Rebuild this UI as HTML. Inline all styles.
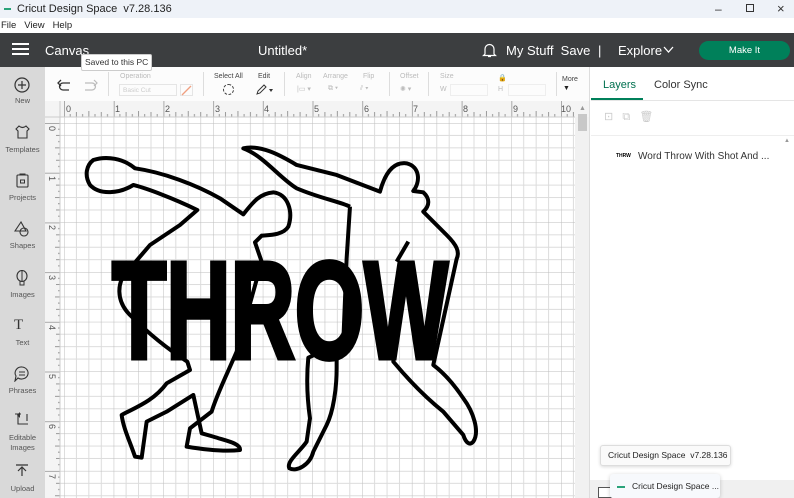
<!DOCTYPE html>
<html><head><meta charset="utf-8"><style>
*{margin:0;padding:0;box-sizing:border-box}
body{width:794px;height:498px;overflow:hidden;position:relative;font-family:"Liberation Sans",sans-serif;background:#fff}
.a{position:absolute}
.t{white-space:nowrap}
.side .lb{position:absolute;left:0;width:45px;text-align:center;font-size:7.5px;color:#555}
.tb{font-size:7px;color:#bbb}
</style></head><body>
<div class="a" style="left:0;top:0;width:794px;height:18px;background:#eef2f8"></div>
<div class="a" style="left:4px;top:8px;width:7px;height:2px;background:#2aa37a"></div>
<div class="a t" style="left:17px;top:3px;font-size:11px;color:#222">Cricut Design Space&nbsp; v7.28.136</div>
<div class="a t" style="left:715px;top:2px;font-size:12px;color:#333">–</div>
<div class="a" style="left:746px;top:4px;width:8px;height:8px;border:1px solid #333"></div>
<div class="a t" style="left:777px;top:1px;font-size:13px;color:#333">×</div>
<div class="a t" style="left:1px;top:20px;font-size:9.5px;color:#222">File&nbsp;&nbsp; View&nbsp;&nbsp; Help</div>
<div class="a" style="left:0;top:33px;width:794px;height:34px;background:#3c3e40"></div>
<div class="a" style="left:12px;top:43px;width:17px;height:2px;background:#fff;box-shadow:0 5px 0 #fff,0 10px 0 #fff"></div>
<div class="a t" style="left:45px;top:43px;font-size:13px;color:#fff">Canvas</div>
<div class="a t" style="left:258px;top:43px;font-size:13px;color:#fff">Untitled*</div>
<svg class="a" style="left:482px;top:42px" width="15" height="16"><path d="M3 12 V7 a4.5 4.5 0 0 1 9 0 V12 l1.5 1.5 H1.5Z M6 14.5 h3" fill="none" stroke="#fff" stroke-width="1.2"/></svg>
<div class="a t" style="left:506px;top:43px;font-size:13px;color:#fff">My Stuff&nbsp; Save</div>
<div class="a t" style="left:598px;top:43px;font-size:13px;color:#fff">|</div>
<div class="a t" style="left:618px;top:43px;font-size:13px;color:#fff">Explore</div>
<svg class="a" style="left:663px;top:46px" width="11" height="8"><path d="M1 1 L5.5 6 L10 1" fill="none" stroke="#fff" stroke-width="1.3"/></svg>
<div class="a" style="left:699px;top:41px;width:91px;height:19px;background:#00805a;border-radius:10px;color:#fff;font-size:9.5px;text-align:center;line-height:19px">Make It</div>
<div class="a" style="left:45px;top:67px;width:545px;height:34px;background:#fcfcfc"></div>
<svg class="a" style="left:55px;top:79px" width="45" height="14"><path d="M12 11 H6 a3.5 3.5 0 0 1 0-7 H13 M4 1 L1 4 L4 7" fill="none" stroke="#333" stroke-width="1.3" transform="translate(2,0)"/><path d="M30 11 H37 a3.5 3.5 0 0 0 0-7 H30 M39 1 L42 4 L39 7" fill="none" stroke="#bbb" stroke-width="1.2"/></svg>
<div class="a" style="left:108px;top:72px;width:1px;height:24px;background:#ddd"></div>
<div class="a t tb" style="left:120px;top:73px">Operation</div>
<div class="a" style="left:119px;top:84px;width:58px;height:12px;border:1px solid #e5e5e5;font-size:6.5px;color:#ccc;padding:2px 3px">Basic Cut</div>
<div class="a" style="left:180px;top:84px;width:13px;height:12px;border:1px solid #e5e5e5"></div>
<svg class="a" style="left:180px;top:84px" width="13" height="12"><path d="M2 11 L11 2" stroke="#f0a080" stroke-width="1.3"/></svg>
<div class="a" style="left:203px;top:72px;width:1px;height:24px;background:#ddd"></div>
<div class="a t" style="left:214px;top:73px;font-size:7px;color:#444">Select All</div>
<div class="a" style="left:223px;top:84px;width:11px;height:11px;border:1.2px dashed #444;border-radius:50%"></div>
<div class="a t" style="left:258px;top:73px;font-size:7px;color:#444">Edit</div>
<svg class="a" style="left:255px;top:84px" width="20" height="12"><path d="M2 10 L3 7 L9 1 L11 3 L5 9 Z" fill="none" stroke="#333" stroke-width="1"/><path d="M14 5 h4 l-2 3z" fill="#333"/></svg>
<div class="a" style="left:284px;top:72px;width:1px;height:24px;background:#ddd"></div>
<div class="a t tb" style="left:296px;top:73px">Align</div><div class="a t tb" style="left:297px;top:85px">|▭ ▾</div>
<div class="a t tb" style="left:323px;top:73px">Arrange</div><div class="a t tb" style="left:328px;top:85px">⧉ ▾</div>
<div class="a t tb" style="left:363px;top:73px">Flip</div><div class="a t tb" style="left:360px;top:85px">⫽ ▾</div>
<div class="a" style="left:389px;top:72px;width:1px;height:24px;background:#ddd"></div>
<div class="a t tb" style="left:400px;top:73px">Offset</div><div class="a t tb" style="left:400px;top:85px">✺ ▾</div>
<div class="a" style="left:428px;top:72px;width:1px;height:24px;background:#ddd"></div>
<div class="a t tb" style="left:440px;top:73px">Size</div>
<div class="a t tb" style="left:440px;top:86px">W</div><div class="a" style="left:450px;top:84px;width:38px;height:12px;border:1px solid #eee"></div>
<div class="a t tb" style="left:498px;top:74px">🔒</div>
<div class="a t tb" style="left:498px;top:86px">H</div><div class="a" style="left:508px;top:84px;width:38px;height:12px;border:1px solid #eee"></div>
<div class="a" style="left:556px;top:72px;width:1px;height:24px;background:#ddd"></div>
<div class="a t" style="left:562px;top:76px;font-size:7px;color:#444">More</div>
<div class="a t" style="left:563px;top:85px;font-size:7px;color:#222">▼</div>
<div class="a side" style="left:0;top:67px;width:45px;height:431px;background:#d9d9d9">
<svg class="a" style="left:13px;top:9px" width="18" height="18"><circle cx="9" cy="9" r="7" fill="none" stroke="#333" stroke-width="1.2"/><path d="M9 5v8M5 9h8" stroke="#333" stroke-width="1.2"/></svg>
<div class="lb" style="top:29px">New</div>
<svg class="a" style="left:15px;top:58px" width="15" height="14"><path d="M4 1 L1 4 L3 6 L3 13 L12 13 L12 6 L14 4 L11 1 Q7.5 4 4 1Z" fill="none" stroke="#333" stroke-width="1.1"/></svg>
<div class="lb" style="top:78px">Templates</div>
<svg class="a" style="left:16px;top:106px" width="13" height="15"><rect x="1" y="2" width="11" height="12" rx="1" fill="none" stroke="#333" stroke-width="1.1"/><path d="M4 2 V1 H9 V2 M4.5 7 h4 v3 h-4z" fill="none" stroke="#333"/></svg>
<div class="lb" style="top:126px">Projects</div>
<svg class="a" style="left:14px;top:154px" width="16" height="16"><path d="M7 1 L1 10 H12 Z" fill="none" stroke="#333" stroke-width="1.1"/><circle cx="10" cy="11" r="4" fill="none" stroke="#333" stroke-width="1.1"/></svg>
<div class="lb" style="top:174px">Shapes</div>
<svg class="a" style="left:15px;top:203px" width="14" height="17"><ellipse cx="7" cy="6" rx="5" ry="5.5" fill="none" stroke="#333" stroke-width="1.1"/><path d="M5 11 V15 H9 V11 M7 1 V11" fill="none" stroke="#333"/></svg>
<div class="lb" style="top:223px">Images</div>
<div class="a t" style="left:14px;top:250px;font-size:15px;color:#333;font-family:'Liberation Serif',serif">T</div>
<div class="lb" style="top:271px">Text</div>
<svg class="a" style="left:14px;top:299px" width="16" height="16"><path d="M8 1 a6.5 6 0 1 1 -4 11 L1 15 L2 10 A6.5 6 0 0 1 8 1Z" fill="none" stroke="#333" stroke-width="1.1"/><path d="M5 6h6M5 9h6" stroke="#333"/></svg>
<div class="lb" style="top:319px">Phrases</div>
<svg class="a" style="left:14px;top:344px" width="16" height="16"><path d="M4 3 V13 H14 M1 3 H7 M13 3 V10" fill="none" stroke="#333" stroke-width="1.1"/><path d="M6 1 L3 4 L6 7z" fill="#333"/></svg>
<div class="lb" style="top:366px;line-height:10px">Editable<br>Images</div>
<svg class="a" style="left:15px;top:397px" width="14" height="13"><path d="M1 1 H13 M7 12 V4 M3 7 L7 3 L11 7" fill="none" stroke="#333" stroke-width="1.2"/></svg>
<div class="lb" style="top:417px">Upload</div>
</div>
<svg class="a" style="left:45px;top:101px" width="545" height="397">
<defs>
<pattern id="g" x="19" y="22" width="49.7" height="49.7" patternUnits="userSpaceOnUse">
<path d="M12.4 0V49.7M24.85 0V49.7M37.3 0V49.7M0 12.4H49.7M0 24.85H49.7M0 37.3H49.7" stroke="#dcdcdc" stroke-width="1"/>
<path d="M0 0V49.7M0 0H49.7" stroke="#bdbdbd" stroke-width="1"/>
</pattern>
<pattern id="rt" x="19" y="0" width="49.7" height="16" patternUnits="userSpaceOnUse">
<path d="M0.5 0V16" stroke="#aaa"/><path d="M6.2 13V16M12.4 11V16M18.6 13V16M24.85 10V16M31 13V16M37.3 11V16M43.5 13V16" stroke="#999"/>
</pattern>
<pattern id="rl" x="0" y="22" width="16" height="49.7" patternUnits="userSpaceOnUse">
<path d="M0 0.5H16" stroke="#aaa"/><path d="M13 6.2H16M11 12.4H16M13 18.6H16M10 24.85H16M13 31H16M11 37.3H16M13 43.5H16" stroke="#999"/>
</pattern>
</defs>
<rect x="15" y="16" width="530" height="381" fill="#fff"/>
<rect x="15" y="16" width="515" height="381" fill="url(#g)"/>
<rect x="0" y="0" width="545" height="16" fill="#f4f4f4"/>
<rect x="15" y="0" width="515" height="16" fill="url(#rt)"/>
<rect x="0" y="16" width="15" height="381" fill="#f4f4f4"/>
<rect x="0" y="16" width="15" height="381" fill="url(#rl)"/>
<line x1="0" y1="16" x2="530" y2="16" stroke="#ccc"/><line x1="15" y1="0" x2="15" y2="397" stroke="#ccc"/>
<g font-size="9" fill="#555" font-family="Liberation Sans">
<text x="21" y="11">0</text><text x="70" y="11">1</text><text x="120" y="11">2</text><text x="170" y="11">3</text><text x="219" y="11">4</text><text x="269" y="11">5</text><text x="319" y="11">6</text><text x="368" y="11">7</text><text x="418" y="11">8</text><text x="468" y="11">9</text><text x="516" y="11">10</text>
<g transform="rotate(90)"><text x="25" y="-4">0</text><text x="75" y="-4">1</text><text x="124" y="-4">2</text><text x="174" y="-4">3</text><text x="224" y="-4">4</text><text x="273" y="-4">5</text><text x="323" y="-4">6</text><text x="373" y="-4">7</text></g>
</g>
<rect x="530" y="16" width="15" height="381" fill="#f1f1f1"/>
<rect x="533" y="13" width="9" height="17" fill="#c8c8c8"/>
<rect x="530" y="0" width="15" height="12" fill="#f4f4f4"/>
<text x="534" y="9" font-size="7" fill="#999">▲</text>
<line x1="545" y1="0" x2="545" y2="397" stroke="#ddd"/>
<g transform="translate(35,34) scale(0.3333)" fill="none" stroke="#000" stroke-width="12" stroke-linejoin="round">
<path d="M40,75 C80,62 130,70 165,100 C250,112 350,150 420,190 L490,238 C520,200 540,175 580,172 C625,178 640,230 625,275 C610,300 570,300 545,302 L525,322 L545,380 L470,650 C440,720 410,780 395,830 L330,880 L320,935 C380,945 440,950 480,945 C482,925 440,918 400,905 L365,895 L340,780 L260,830 L200,860 L185,968 L165,965 C150,920 130,880 125,840 C160,820 220,800 260,745 L330,705 L322,680 C260,640 200,590 150,540 C110,500 105,440 150,400 L210,330 L300,270 L352,225 C280,190 200,160 160,150 C120,175 60,182 30,150 C12,120 20,90 40,75 Z"/>
<path d="M810,215 C780,200 720,190 650,160 C600,130 550,62 490,40 C540,28 600,60 650,90 L770,120 L900,170 C915,115 940,80 980,85 C1020,95 1022,140 1000,168 L1030,172 C1050,190 1050,212 1030,230 L1100,300 C1130,330 1140,350 1130,372 L1060,690 C1100,720 1130,760 1150,790 C1180,830 1200,890 1180,920 C1170,932 1158,925 1150,900 L1090,830 C1040,790 990,740 940,680 L950,600"/>
<path d="M985,320 L950,380"/>
<path d="M810,215 L800,370 L790,620 L685,668 C680,720 680,780 690,850 L680,920 C660,950 618,980 628,1000 C650,1012 690,990 700,950 L740,870 C760,830 770,760 770,700 L770,670"/>
</g>
<text x="67" y="257" font-family="'Liberation Sans',sans-serif" font-weight="bold" font-size="138" textLength="336" lengthAdjust="spacingAndGlyphs" fill="#000" stroke="#000" stroke-width="5" stroke-linejoin="miter">THROW</text>
</svg>
<div class="a" style="left:589px;top:67px;width:1px;height:431px;background:#ddd"></div>
<div class="a t" style="left:603px;top:79px;font-size:11px;color:#00704f">Layers</div>
<div class="a t" style="left:654px;top:79px;font-size:11px;color:#333">Color Sync</div>
<div class="a" style="left:591px;top:98px;width:52px;height:2px;background:#00805a"></div>
<div class="a" style="left:591px;top:100px;width:203px;height:1px;background:#e5e5e5"></div>
<div class="a t" style="left:604px;top:110px;font-size:11px;color:#ccc">⊡&nbsp;&nbsp; ⧉&nbsp;&nbsp; 🗑</div>
<div class="a" style="left:591px;top:135px;width:203px;height:1px;background:#eee"></div>
<div class="a" style="left:616px;top:150px;width:15px;height:12px;font-size:5px;font-weight:bold;line-height:12px">THRW</div>
<div class="a t" style="left:638px;top:151px;font-size:10px;color:#333">Word Throw With Shot And ...</div>
<div class="a t" style="left:784px;top:138px;font-size:6px;color:#999">▲</div>
<div class="a" style="left:590px;top:480px;width:204px;height:18px;background:#f0f0f0"></div>
<div class="a" style="left:598px;top:487px;width:14px;height:11px;border:1px solid #555;background:#fff"></div>
<div class="a t" style="left:81px;top:54px;height:17px;padding:0 3px;background:#fff;border:1px solid #ccc;border-radius:2px;font-size:8.5px;color:#333;line-height:15px">Saved to this PC</div>
<div class="a t" style="left:600px;top:445px;width:131px;height:21px;background:#fafafa;border:1px solid #ddd;border-radius:3px;box-shadow:0 1px 3px rgba(0,0,0,.15);font-size:8.5px;color:#222;line-height:19px;padding-left:7px">Cricut Design Space&nbsp; v7.28.136</div>
<div class="a" style="left:610px;top:474px;width:110px;height:24px;background:#f7f9fc;box-shadow:0 1px 4px rgba(0,0,0,.2);border-radius:3px"></div>
<div class="a" style="left:617px;top:486px;width:8px;height:1.5px;background:#2aa37a"></div>
<div class="a t" style="left:632px;top:481px;font-size:8.5px;color:#222">Cricut Design Space ...</div>
</body></html>
